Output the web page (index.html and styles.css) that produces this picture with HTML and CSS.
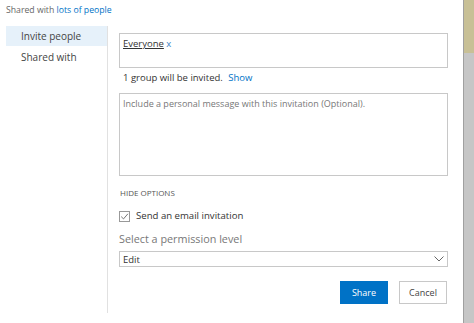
FILE: index.html
```html
<!DOCTYPE html>
<html lang="en">
<head>
  <meta charset="UTF-8" />
  <title>Share</title>
  <link rel="stylesheet" href="styles.css">
</head>
<body>
  <div class="page">
    <div class="dialog">
      <div class="shared-line">Shared with <a href="#">lots of people</a></div>
      <div class="dialog-body">
        <!-- left tabs -->
        <div class="nav">
          <div class="nav-item selected">Invite people</div>
          <div class="nav-item">Shared with</div>
        </div>

        <!-- invite form -->
        <div class="content">
          <div class="people-box">
            <span class="person">Everyone</span> <a href="#" class="remove">x</a>
          </div>
          <div class="invite-count">1 group will be invited. <a href="#">Show</a></div>
          <div class="message">Include a personal message with this invitation (Optional).</div>
          <div class="hide-options">HIDE OPTIONS</div>
          <label class="check-row">
            <span class="checkbox">
              <svg width="9" height="9" viewBox="0 0 9 9"><path d="M1.2 4.6 L3.5 6.9 L7.9 1.8" fill="none" stroke="#666" stroke-width="0.9"/></svg>
            </span>
            Send an email invitation
          </label>
          <div class="perm-label">Select a permission level</div>
          <div class="select">
            <span>Edit</span>
            <svg width="10" height="6" viewBox="0 0 10 6"><path d="M0.5 0.5 L5 5 L9.5 0.5" fill="none" stroke="#666" stroke-width="1"/></svg>
          </div>
          <div class="buttons">
            <button class="btn primary">Share</button>
            <button class="btn">Cancel</button>
          </div>
        </div>
      </div>
    </div>
    <div class="strip"></div>
  </div>
</body>
</html>
```

FILE: styles.css
```css
* {
  box-sizing: border-box;
  font-family: 'Open Sans', 'Noto Sans', sans-serif;
}

body {
  margin: 0;
  background: white;
  color: #333;
}

a {
  color: #0072c6;
  text-decoration: none;
}

.page {
  display: flex;
  height: 323px;
}

.dialog {
  flex: 1;
  padding: 3px 0 0 6px;
}

.shared-line {
  font-size: 8.7px;
  line-height: 15px;
  color: #666;
  margin-bottom: 8px;
}

.dialog-body {
  display: flex;
}

.nav {
  width: 102px;
  height: 287px;
  border-right: 1px solid #e1e1e1;
}

.nav-item {
  height: 20px;
  line-height: 20px;
  padding-left: 15px;
  font-size: 10px;
  color: #444;
  margin-bottom: 1px;
}

.nav-item.selected {
  background: #e6f1fa;
}

.content {
  width: 340px;
  padding: 7px 0 0 11px;
}

.people-box {
  height: 35px;
  border: 1px solid #c8c8c8;
  padding: 3px 3px;
  font-size: 9.5px;
  line-height: 14px;
}

.person {
  color: #333;
  text-decoration: underline;
}

.remove {
  color: #3b7fc4;
}

.invite-count {
  margin-top: 3px;
  padding-left: 4px;
  font-size: 9.5px;
  line-height: 14px;
  color: #333;
}

.invite-count a {
  margin-left: 3px;
}

.message {
  margin-top: 8px;
  height: 83px;
  border: 1px solid #c8c8c8;
  padding: 3px 3px;
  font-size: 9px;
  line-height: 14px;
  color: #777;
}

.hide-options {
  margin-top: 10px;
  padding-left: 1px;
  font-size: 8px;
  line-height: 14px;
  color: #555;
}

.check-row {
  margin-top: 9px;
  display: flex;
  align-items: center;
  gap: 6px;
  font-size: 9.6px;
  line-height: 14px;
  color: #333;
}

.checkbox {
  width: 11px;
  height: 11px;
  border: 1px solid #999;
  display: flex;
  align-items: center;
  justify-content: center;
}

.perm-label {
  margin-top: 8px;
  font-size: 10.8px;
  line-height: 16px;
  color: #777;
}

.select {
  margin-top: 4px;
  height: 16px;
  border: 1px solid #c8c8c8;
  padding: 0 3px 0 3px;
  display: flex;
  align-items: center;
  justify-content: space-between;
  font-size: 9.5px;
  color: #333;
}

.buttons {
  margin-top: 14px;
  display: flex;
  justify-content: flex-end;
  gap: 11px;
  padding-right: 1px;
}

.btn {
  width: 48px;
  height: 23px;
  border: 1px solid #c8c8c8;
  background: white;
  color: #444;
  font-size: 9px;
  padding: 0;
}

.btn.primary {
  background: #0072c6;
  border-color: #0072c6;
  color: white;
}

.strip {
  width: 11px;
  border-left: 1px solid #a0a0a0;
  background: linear-gradient(#c8c096 0 53px, #c6c6c6 53px);
}
```
